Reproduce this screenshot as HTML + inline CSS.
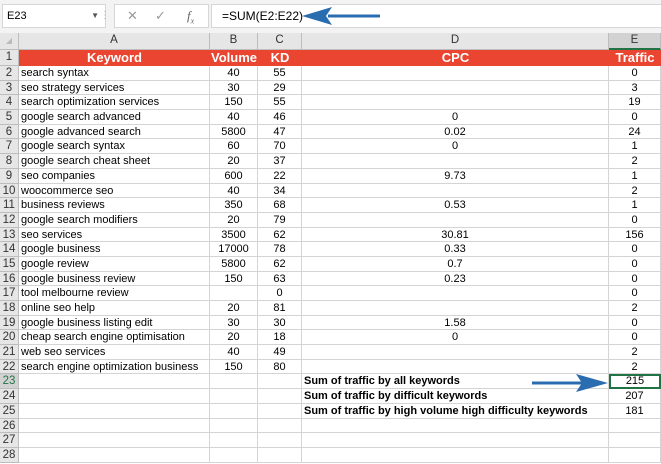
<!DOCTYPE html>
<html><head><style>
*{margin:0;padding:0;box-sizing:border-box}
body{width:661px;height:464px;overflow:hidden;background:#fff;font-family:"Liberation Sans",Arial,sans-serif;position:relative}
.top{position:absolute;left:0;top:0;width:661px;height:33px;background:#f3f3f3}
.box{position:absolute;background:#fff;border:1px solid #d6d6d6}
.grid{position:absolute;left:0;top:33px;display:grid;grid-template-columns:19px 191px 48px 44px 307px 52px;grid-template-rows:17px 16px repeat(27,14.7px)}
.grid div{border-right:1px solid #d4d4d4;border-bottom:1px solid #d4d4d4;font-size:11px;line-height:14px;white-space:nowrap;overflow:hidden;color:#000}
.ch{background:#e6e6e6;text-align:center;font-size:11.5px!important;color:#333!important;border-color:#bdbdbd!important}
.rh{background:#e6e6e6;text-align:center;font-size:11.5px!important;color:#333!important;border-color:#bdbdbd!important}
.h{background:#ea4530;color:#fff!important;font-weight:bold;font-size:13px!important;text-align:center;border:none!important;line-height:16px!important}
.c{text-align:center}
.l{padding-left:2px}
.b{font-weight:bold;padding-left:2px}
</style></head><body>
<div class="top"></div>
<div class="box" style="left:2px;top:4px;width:104px;height:24px;font-size:11px;line-height:22px;padding-left:4px">E23<span style="position:absolute;right:6px;top:0;font-size:8px;color:#555">▼</span></div>
<div style="position:absolute;left:100px;top:10px;color:#aaa;font-size:10px">⋮</div>
<div class="box" style="left:114px;top:4px;width:95px;height:24px;color:#999;font-size:13px;line-height:22px"><span style="position:absolute;left:12px">✕</span><span style="position:absolute;left:40px">✓</span><span style="position:absolute;left:72px;font-style:italic;font-family:'Liberation Serif',serif;color:#666">f<sub style="font-size:8px">x</sub></span></div>
<div class="box" style="left:211px;top:4px;width:452px;height:24px;font-size:12px;line-height:22px;padding-left:10px">=SUM(E2:E22)</div>
<svg style="position:absolute;left:300px;top:5px" width="82" height="22"><path d="M80 11 L28 11" stroke="#2a6cb0" stroke-width="3"/><path d="M2 11 L32 2 L26 11 L32 20 Z" fill="#2a6cb0"/></svg>
<div class="grid">
<div class="ch"><span style="color:#bbb;font-size:8px">◢</span></div><div class="ch">A</div><div class="ch">B</div><div class="ch">C</div><div class="ch">D</div><div class="ch" style="background:#d2d2d2;border-bottom:2px solid #217346!important">E</div>
<div class="rh">1</div><div class="h">Keyword</div><div class="h">Volume</div><div class="h">KD</div><div class="h">CPC</div><div class="h">Traffic</div>
<div class="rh">2</div><div class="l">search syntax</div><div class="c">40</div><div class="c">55</div><div></div><div class="c">0</div>
<div class="rh">3</div><div class="l">seo strategy services</div><div class="c">30</div><div class="c">29</div><div></div><div class="c">3</div>
<div class="rh">4</div><div class="l">search optimization services</div><div class="c">150</div><div class="c">55</div><div></div><div class="c">19</div>
<div class="rh">5</div><div class="l">google search advanced</div><div class="c">40</div><div class="c">46</div><div class="c">0</div><div class="c">0</div>
<div class="rh">6</div><div class="l">google advanced search</div><div class="c">5800</div><div class="c">47</div><div class="c">0.02</div><div class="c">24</div>
<div class="rh">7</div><div class="l">google search syntax</div><div class="c">60</div><div class="c">70</div><div class="c">0</div><div class="c">1</div>
<div class="rh">8</div><div class="l">google search cheat sheet</div><div class="c">20</div><div class="c">37</div><div></div><div class="c">2</div>
<div class="rh">9</div><div class="l">seo companies</div><div class="c">600</div><div class="c">22</div><div class="c">9.73</div><div class="c">1</div>
<div class="rh">10</div><div class="l">woocommerce seo</div><div class="c">40</div><div class="c">34</div><div></div><div class="c">2</div>
<div class="rh">11</div><div class="l">business reviews</div><div class="c">350</div><div class="c">68</div><div class="c">0.53</div><div class="c">1</div>
<div class="rh">12</div><div class="l">google search modifiers</div><div class="c">20</div><div class="c">79</div><div></div><div class="c">0</div>
<div class="rh">13</div><div class="l">seo services</div><div class="c">3500</div><div class="c">62</div><div class="c">30.81</div><div class="c">156</div>
<div class="rh">14</div><div class="l">google business</div><div class="c">17000</div><div class="c">78</div><div class="c">0.33</div><div class="c">0</div>
<div class="rh">15</div><div class="l">google review</div><div class="c">5800</div><div class="c">62</div><div class="c">0.7</div><div class="c">0</div>
<div class="rh">16</div><div class="l">google business review</div><div class="c">150</div><div class="c">63</div><div class="c">0.23</div><div class="c">0</div>
<div class="rh">17</div><div class="l">tool melbourne review</div><div></div><div class="c">0</div><div></div><div class="c">0</div>
<div class="rh">18</div><div class="l">online seo help</div><div class="c">20</div><div class="c">81</div><div></div><div class="c">2</div>
<div class="rh">19</div><div class="l">google business listing edit</div><div class="c">30</div><div class="c">30</div><div class="c">1.58</div><div class="c">0</div>
<div class="rh">20</div><div class="l">cheap search engine optimisation</div><div class="c">20</div><div class="c">18</div><div class="c">0</div><div class="c">0</div>
<div class="rh">21</div><div class="l">web seo services</div><div class="c">40</div><div class="c">49</div><div></div><div class="c">2</div>
<div class="rh">22</div><div class="l">search engine optimization business</div><div class="c">150</div><div class="c">80</div><div></div><div class="c">2</div>
<div class="rh" style="color:#217346!important;background:#d2d2d2">23</div><div></div><div></div><div></div><div class="b">Sum of traffic by all keywords</div><div class="c" style="border:2px solid #217346;line-height:11px">215</div>
<div class="rh">24</div><div></div><div></div><div></div><div class="b">Sum of traffic by difficult keywords</div><div class="c">207</div>
<div class="rh">25</div><div></div><div></div><div></div><div class="b">Sum of traffic by high volume high difficulty keywords</div><div class="c">181</div>
<div class="rh">26</div><div></div><div></div><div></div><div></div><div></div>
<div class="rh">27</div><div></div><div></div><div></div><div></div><div></div>
<div class="rh">28</div><div></div><div></div><div></div><div></div><div></div>
</div>
<svg style="position:absolute;left:530px;top:372px" width="80" height="22"><path d="M2 11 L52 11" stroke="#2a6cb0" stroke-width="3"/><path d="M78 11 L46 2 L52 11 L46 20 Z" fill="#2a6cb0"/></svg>
</body></html>
